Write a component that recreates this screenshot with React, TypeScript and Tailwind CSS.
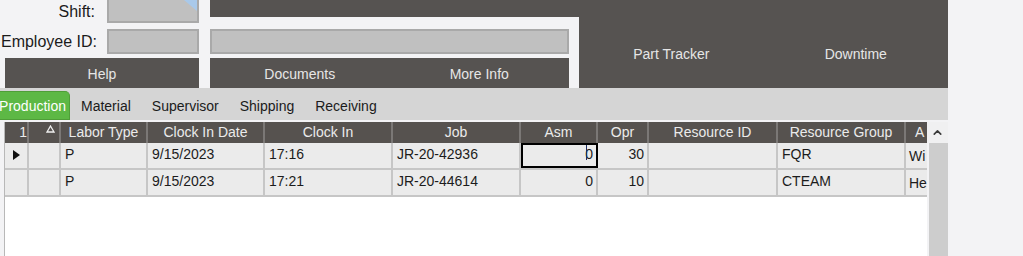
import React from 'react';
import { ChevronUp } from 'lucide-react';

const font = { fontFamily: '"Liberation Sans", Arial, sans-serif' };

type Col = { key: string; label: string; width: number; align?: 'left' | 'right' };

const columns: Col[] = [
  { key: 'sel', label: '1', width: 24 },
  { key: 'sort', label: '', width: 32 },
  { key: 'laborType', label: 'Labor Type', width: 87 },
  { key: 'date', label: 'Clock In Date', width: 117 },
  { key: 'clockIn', label: 'Clock In', width: 128 },
  { key: 'job', label: 'Job', width: 128 },
  { key: 'asm', label: 'Asm', width: 77, align: 'right' },
  { key: 'opr', label: 'Opr', width: 51, align: 'right' },
  { key: 'resId', label: 'Resource ID', width: 129 },
  { key: 'resGroup', label: 'Resource Group', width: 128 },
  { key: 'desc', label: 'A', width: 22 },
];

const rows = [
  { laborType: 'P', date: '9/15/2023', clockIn: '17:16', job: 'JR-20-42936', asm: '0', opr: '30', resId: '', resGroup: 'FQR', desc: 'Wi' },
  { laborType: 'P', date: '9/15/2023', clockIn: '17:21', job: 'JR-20-44614', asm: '0', opr: '10', resId: '', resGroup: 'CTEAM', desc: 'He' },
];

const TopSection = () => (
  <div className="flex h-[88px]">
    {/* left: shift / employee / help */}
    <div className="flex w-[200px] flex-col">
      <div className="flex h-[23px] items-center">
        <span className="w-[107px] pr-[12px] text-right text-[16px] text-[#1b1b1b]">Shift:</span>
        <div className="relative h-[23px] w-[92px] border-x-2 border-b-2 border-[#a9a9a9] bg-[#c0c0c0]">
          <svg className="absolute right-0 top-0" width="13" height="11" viewBox="0 0 13 11">
            <polygon points="0,0 13,0 13,11" fill="#a9c9ea" />
          </svg>
        </div>
      </div>
      <div className="mt-[6px] flex h-[25px] items-center">
        <span className="w-[107px] pr-[10px] text-right text-[16px] text-[#1b1b1b]">Employee ID:</span>
        <div className="h-[25px] w-[92px] border-2 border-[#a9a9a9] bg-[#c0c0c0]" />
      </div>
      <button className="ml-[5px] mt-[4px] flex h-[30px] w-[194px] items-center justify-center bg-[#565351] pt-[2px] text-[14px] text-[#e6e6e6]">
        Help
      </button>
    </div>

    {/* middle: name field / documents / more info */}
    <div className="flex w-[379px] flex-col">
      <div className="ml-[10px] h-[17px] bg-[#565351]" />
      <div className="flex flex-col px-[10px]">
        <div className="mt-[12px] h-[25px] border-2 border-[#a9a9a9] bg-[#c0c0c0]" />
        <div className="mt-[4px] flex h-[30px] bg-[#565351] pt-[2px] text-[14px] text-[#e6e6e6]">
          <span className="flex flex-1 items-center justify-center">Documents</span>
          <span className="flex flex-1 items-center justify-center">More Info</span>
        </div>
      </div>
    </div>

    {/* right: part tracker / downtime */}
    <div className="flex w-[369px] bg-[#565351] pt-[20px] text-[14px] text-[#e6e6e6]">
      <span className="flex flex-1 items-center justify-center">Part Tracker</span>
      <span className="flex flex-1 items-center justify-center">Downtime</span>
    </div>
  </div>
);

const Tabs = () => (
  <div className="flex h-[32px] w-[948px] items-end bg-[#d5d5d5] text-[14px]">
    <div className="flex h-[29px] w-[70px] items-center justify-end rounded-tr-[5px] border border-l-0 border-[#4f9e38] bg-[#5db845] pt-[1px] pr-[3px] text-white">
      <span className="whitespace-nowrap">Production</span>
    </div>
    <div className="ml-[11px] flex h-[29px] items-center gap-[21px] pt-[2px] text-[#1b1b1b]">
      <span>Material</span>
      <span>Supervisor</span>
      <span>Shipping</span>
      <span>Receiving</span>
    </div>
  </div>
);

const SortIcon = () => (
  <svg width="9" height="8" viewBox="0 0 9 8">
    <polygon points="4.5,1 8,7 1,7" fill="none" stroke="#f0f0f0" strokeWidth="1.3" />
  </svg>
);

const RowPointer = () => (
  <svg width="7" height="10" viewBox="0 0 7 10">
    <polygon points="0,0 7,5 0,10" fill="#111" />
  </svg>
);

const headerAlign = (key: string) => {
  if (key === 'sel') return 'items-center justify-end pr-[0px]';
  if (key === 'sort') return 'items-start justify-end pr-[4px] pt-[3px]';
  if (key === 'desc') return 'items-center pl-[9px]';
  return 'items-center justify-center';
};

const cellAlign = (col: Col) => {
  if (col.key === 'sel') return 'items-center justify-center pb-[2px]';
  if (col.key === 'desc') return 'items-start pl-[3px] pt-[3px]';
  if (col.align === 'right') return 'items-center justify-end pb-[3px] pr-[3px]';
  return 'items-center pb-[3px] pl-[4px]';
};

const Grid = () => (
  <div className="flex h-[134px]">
    <div className="ml-[4px] w-[923px] overflow-hidden border-l border-[#b8b8b8] bg-white">
      <div className="flex h-[21px] bg-[#56524f] text-[14px] text-[#ebebeb]">
        {columns.map(col => (
          <div
            key={col.key}
            style={{ width: col.width }}
            className={`flex h-full shrink-0 overflow-hidden whitespace-nowrap ${col.key === 'desc' ? '' : 'border-r-2 border-[#7b7876]'} ${headerAlign(col.key)}`}
          >
            {col.key === 'sort' ? <SortIcon /> : col.label}
          </div>
        ))}
      </div>
      {rows.map((row, i) => (
        <div key={i} className="flex h-[27px] border-b-2 border-[#c6c6c6] bg-[#ebebeb] text-[14px] text-[#1c1c1c]">
          {columns.map(col => {
            const editing = i === 0 && col.key === 'asm';
            let content: React.ReactNode = null;
            if (col.key === 'sel') content = i === 0 ? <RowPointer /> : null;
            else if (col.key !== 'sort') content = (row as Record<string, string>)[col.key];
            return (
              <div
                key={col.key}
                style={{ width: col.width }}
                className={`flex h-full shrink-0 overflow-hidden whitespace-nowrap ${
                  editing ? 'border-2 border-black' : col.key === 'desc' ? '' : 'border-r-2 border-[#c6c6c6]'
                } ${cellAlign(col)}`}
              >
                {editing ? (
                  <span className="relative">
                    {content}
                    <span className="absolute left-[1px] top-[0px] h-[16px] w-[1px] bg-[#1d2f63]" />
                  </span>
                ) : (
                  content
                )}
              </div>
            );
          })}
        </div>
      ))}
    </div>
    <div className="flex w-[21px] flex-col">
      <div className="flex h-[21px] items-center justify-center bg-[#f0f0f1]">
        <ChevronUp size={13} strokeWidth={3} color="#3a3a3a" />
      </div>
      <div className="ml-[2px] flex-1 bg-[#cdcdcd]" />
    </div>
  </div>
);

export default function App() {
  return (
    <div className="h-[256px] w-[1023px] overflow-hidden bg-[#f3f3f5]" style={font}>
      <TopSection />
      <Tabs />
      <div className="h-[2px]" />
      <Grid />
    </div>
  );
}
